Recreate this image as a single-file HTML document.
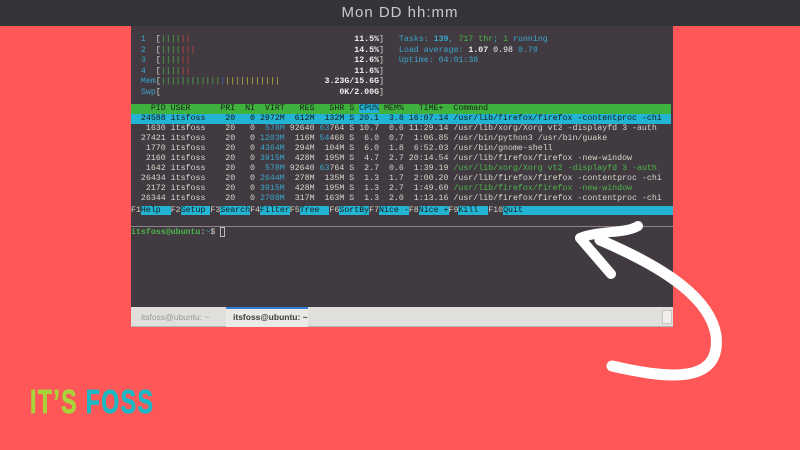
<!DOCTYPE html>
<html><head><meta charset="utf-8"><style>
*{margin:0;padding:0;box-sizing:border-box}
body{width:800px;height:450px;overflow:hidden;background:#ff5757;position:relative;font-family:"Liberation Sans",sans-serif}
#top{position:absolute;left:0;top:0;width:800px;height:26px;background:#333438;color:#c9c9c9;font-size:15px;text-align:center;line-height:26px;letter-spacing:1px}
#term{position:absolute;left:131px;top:26px;width:542px;height:281px;background:#413a40;overflow:hidden}
.mono{font-family:"Liberation Mono",monospace;font-size:8.28px;color:#d6d6cc;white-space:pre}
.l{position:absolute;left:0;height:10px;line-height:10px;width:540px}
.c{color:#3aa6cc}.g{color:#4cb74a}.r{color:#d8413b}.y{color:#c9bb3a}.b{color:#3f6fd6}.w{color:#eeeeee;font-weight:bold}
.hdr{background:#3fb23d;color:#1a1a1a}
.sel{background:#22b4d2;color:#1a1a1a}
.cy{background:#22b4d2;color:#1a1a1a}
.gc{color:#4cb74a}
#sep{position:absolute;left:0;top:200px;width:542px;height:1px;background:#8b8589}
#tabs{position:absolute;left:131px;top:307px;width:542px;height:20px;background:#e1dfdb;border-bottom:1px solid #b8b5b2}
.tab{position:absolute;top:0;height:20px;line-height:20px;font-size:8.5px}
#logo{position:absolute;left:30px;top:383px;font-family:"Liberation Sans Narrow","Liberation Sans",sans-serif;font-weight:bold;font-size:33px;letter-spacing:2px;transform:scaleX(0.7);transform-origin:left;white-space:nowrap;-webkit-text-stroke:0.8px currentColor}
</style></head><body>
<div id="top">Mon DD hh:mm</div>
<div id="term" class="mono">
<div class="l" style="top:9px">  <span class="c">1</span>  [<span class="g">||||</span><span class="r">||</span>                                 <span class="w">11.5%</span>]   <span class="c">Tasks: </span><span class="w" style="color:#3aa6cc">139</span><span class="c">, </span><span class="g">717 thr</span><span class="c">; </span><span class="g">1</span><span class="c"> running</span></div>
<div class="l" style="top:19.5px">  <span class="c">2</span>  [<span class="g">||||</span><span class="r">|||</span>                                <span class="w">14.5%</span>]   <span class="c">Load average: </span><span class="w">1.07</span> <span class="w" style="font-weight:normal">0.98</span> <span class="c">0.79</span></div>
<div class="l" style="top:30px">  <span class="c">3</span>  [<span class="g">||||</span><span class="r">||</span>                                 <span class="w">12.6%</span>]   <span class="c">Uptime: 04:01:38</span></div>
<div class="l" style="top:40.5px">  <span class="c">4</span>  [<span class="g">||||</span><span class="r">||</span>                                 <span class="w">11.6%</span>]</div>
<div class="l" style="top:51px">  <span class="c">Mem</span>[<span class="g">||||||||||||</span><span class="b">|</span><span class="y">|||||||||||</span>         <span class="w">3.23G/15.6G</span>]</div>
<div class="l" style="top:61.5px">  <span class="c">Swp</span>[                                    <span class="w">0K/2.00G</span>]</div>
<div class="l hdr" style="top:78px">    PID USER      PRI  NI  VIRT   RES   SHR S <span class="cy">CPU%</span> MEM%   TIME+  Command</div>
<div class="l sel" style="top:88px">  24588 itsfoss    20   0 2972M  612M  132M S 20.1  3.8 16:07.14 /usr/lib/firefox/firefox -contentproc -chi</div>
<div class="l" style="top:98px">   1630 itsfoss    20   0  <span class="c">578M</span> 92640 <span class="c">63</span>764 S 10.7  0.6 11:29.14 /usr/lib/xorg/Xorg vt2 -displayfd 3 -auth</div>
<div class="l" style="top:108px">  27421 itsfoss    20   0 <span class="c">1203M</span>  116M <span class="c">54</span>468 S  6.0  0.7  1:06.85 /usr/bin/python3 /usr/bin/guake</div>
<div class="l" style="top:118px">   1770 itsfoss    20   0 <span class="c">4364M</span>  294M  104M S  6.0  1.8  6:52.03 /usr/bin/gnome-shell</div>
<div class="l" style="top:128px">   2160 itsfoss    20   0 <span class="c">3915M</span>  428M  195M S  4.7  2.7 20:14.54 /usr/lib/firefox/firefox -new-window</div>
<div class="l" style="top:138px">   1642 itsfoss    20   0  <span class="c">578M</span> 92640 <span class="c">63</span>764 S  2.7  0.6  1:39.19 <span class="gc">/usr/lib/xorg/Xorg vt2 -displayfd 3 -auth</span></div>
<div class="l" style="top:148px">  26434 itsfoss    20   0 <span class="c">2644M</span>  278M  135M S  1.3  1.7  2:00.20 /usr/lib/firefox/firefox -contentproc -chi</div>
<div class="l" style="top:158px">   2172 itsfoss    20   0 <span class="c">3915M</span>  428M  195M S  1.3  2.7  1:49.60 <span class="gc">/usr/lib/firefox/firefox -new-window</span></div>
<div class="l" style="top:168px">  26344 itsfoss    20   0 <span class="c">2708M</span>  317M  163M S  1.3  2.0  1:13.16 /usr/lib/firefox/firefox -contentproc -chi</div>
<div class="l" style="top:180px">F1<span class="cy">Help  </span>F2<span class="cy">Setup </span>F3<span class="cy">Search</span>F4<span class="cy">Filter</span>F5<span class="cy">Tree  </span>F6<span class="cy">SortBy</span>F7<span class="cy">Nice -</span>F8<span class="cy">Nice +</span>F9<span class="cy">Kill  </span>F10<span class="cy">Quit                                    </span></div>
<div id="sep"></div>
<div class="l" style="top:201px;height:12px;line-height:12px"><span class="g" style="font-weight:bold">itsfoss@ubuntu</span>:<span class="c">~</span>$ <span style="display:inline-block;width:5px;height:10px;border:1px solid #bbb;vertical-align:middle"></span></div>
</div>
<div id="tabs">
<div class="tab" style="left:10px;color:#9a9896">itsfoss@ubuntu: ~</div>
<div class="tab" style="left:95px;width:82px;background:#ebe9e6;border-top:2px solid #2f7fd4;line-height:17px;padding-left:7px;color:#3b3b3b;font-weight:bold">itsfoss@ubuntu: ~</div>
<div style="position:absolute;right:1px;top:3px;width:10px;height:14px;border:1px solid #c8c5c2;background:#f0eeec"></div>
</div>
<svg style="position:absolute;left:0;top:0" width="800" height="450">
<path d="M612 366 C 665 378, 722 386, 716 335 C 710 300, 670 270, 600 240" fill="none" stroke="#fff" stroke-width="11" stroke-linecap="round"/>
<path d="M638 226 C 625 234, 600 230, 580 238 L 611 274" fill="none" stroke="#fff" stroke-width="10" stroke-linecap="round" stroke-linejoin="round"/>
</svg>
<div id="logo"><span style="color:#a8d43a">IT’S</span> <span style="color:#1cb8c4">FOSS</span></div>
</body></html>
